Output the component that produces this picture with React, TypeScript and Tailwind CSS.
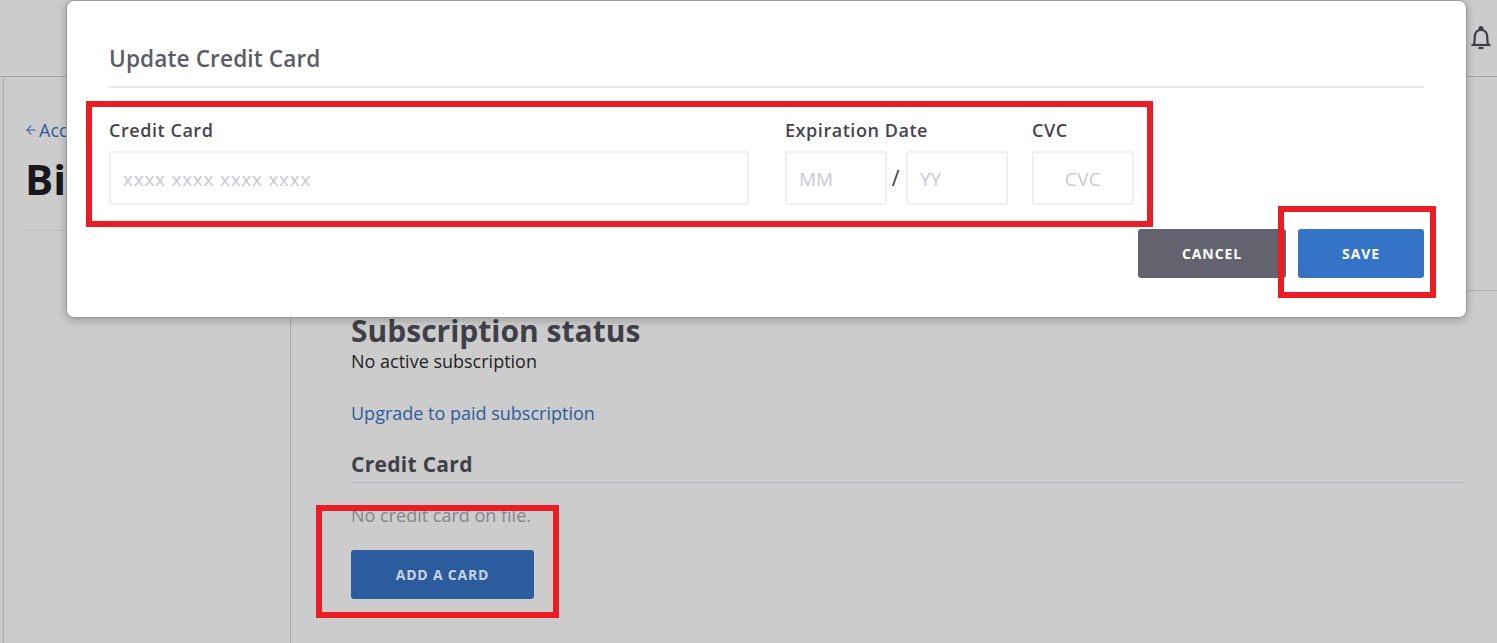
import { ArrowLeft } from "lucide-react";

function Field({ placeholder, className }: { placeholder: string; className: string }) {
    return (
        <input
            placeholder={placeholder}
            className={`h-[54px] rounded-[3px] border-2 border-[#eeeef3] bg-white pt-[2px] text-[19px] placeholder:text-[#c8c8d4] outline-none ${className}`}
        />
    );
}

function BellIcon() {
    return (
        <svg width="20" height="24" viewBox="0 0 20 24" fill="none" stroke="#3e3e46" strokeWidth="2.2">
            <circle cx="10" cy="2.5" r="1.4" fill="#3e3e46" />
            <path d="M3 18.5 C4 15 3.5 11.5 4 9 C4.6 6 7.2 4 10 4 C12.8 4 15.4 6 16 9 C16.5 11.5 16 15 17 18.5" />
            <path d="M0.5 19 H19.5" />
            <path d="M7.5 22 H12.5" />
        </svg>
    );
}

function UpdateCardModal() {
    return (
        <div className="absolute left-[66px] top-0 w-[1401px] h-[318px] rounded-lg border border-[#9a9a9a] bg-white pl-[42px] pr-[42px] pt-[43px] shadow-[0_2px_8px_rgba(0,0,0,0.25)]">
            <h2 className="text-[22.6px] leading-[30px] font-semibold tracking-[0.12px] text-[#5c5c68] pb-[12px] border-b-2 border-[#e6e6ea]">Update Credit Card</h2>
            <div className="flex mt-[30px]">
                <div className="w-[640px] mr-[36px]">
                    <label className="block text-[18px] leading-[24px] font-semibold tracking-[0.55px] text-[#45454d] mb-[9px]">Credit Card</label>
                    <Field placeholder="xxxx xxxx xxxx xxxx" className="w-full pl-[12px] tracking-[0.75px]" />
                </div>
                <div className="w-[247px]">
                    <label className="block text-[18px] leading-[24px] font-semibold tracking-[0.55px] text-[#45454d] mb-[9px] whitespace-nowrap">Expiration Date</label>
                    <div className="flex items-center">
                        <Field placeholder="MM" className="w-[102px] pl-[12px]" />
                        <span className="w-[19px] pt-[2px] pr-[2px] text-center text-[21px] text-[#3b3b42]">/</span>
                        <Field placeholder="YY" className="w-[102px] pl-[12px]" />
                    </div>
                </div>
                <div>
                    <label className="block text-[18px] leading-[24px] font-semibold tracking-[0.55px] text-[#45454d] mb-[9px]">CVC</label>
                    <Field placeholder="CVC" className="w-[102px] text-center tracking-[0.4px]" />
                </div>
            </div>
            <div className="flex justify-end gap-[12px] mt-[24px]">
                <button className="w-[148px] h-[49px] rounded-[3px] bg-[#62636f] text-white text-[14px] font-bold tracking-[0.9px]">CANCEL</button>
                <button className="w-[126px] h-[49px] rounded-[3px] bg-[#3573c6] text-white text-[14px] font-bold tracking-[0.9px]">SAVE</button>
            </div>
        </div>
    );
}

export default function App() {
    return (
        <div className="relative h-[643px] overflow-hidden bg-[#cccccc] font-['Open_Sans',sans-serif]">
            <header className="h-[77px] border-b border-[#a8a8a8] flex items-center justify-end pr-[6px] pb-[1px]">
                <BellIcon />
            </header>
            <div className="flex h-[566px] ml-[3px]">
                <aside className="w-[288px] border-l border-r border-[#a8a8a8] pl-[21px] shrink-0">
                    <div className="pt-[41px] flex items-center text-[18px] leading-[24px] text-[#2b5c9e] whitespace-nowrap">
                        <ArrowLeft size={14} strokeWidth={1.8} className="ml-[-1px] mr-[1px]" />
                        <span>Account</span>
                    </div>
                    <h1 className="mt-[12px] text-[42px] leading-[50px] font-bold text-[#17171c] pb-[26px] border-b border-[#bdbdbd]">Billing</h1>
                </aside>
                <main className="flex-1">
                    <div className="h-[214px] border-b border-[#b0b0b0]"></div>
                    <div className="pl-[60px] pr-[33px] pt-[21px]">
                        <h2 className="text-[30px] leading-[38px] font-bold text-[#3f3f48]">Subscription status</h2>
                        <p className="text-[18px] leading-[22px] text-[#1f1f24]">No active subscription</p>
                        <a className="block mt-[30px] text-[18px] leading-[22px] text-[#2b5c9e]">Upgrade to paid subscription</a>
                        <h3 className="mt-[27px] text-[21px] leading-[26px] font-bold tracking-[0.3px] text-[#3f3f48] pb-[5px] border-b border-[#b8b8c4]">Credit Card</h3>
                        <p className="mt-[21px] text-[18px] leading-[22px] text-[#85858f]">No credit card on file.</p>
                        <button className="mt-[24px] w-[183px] h-[49px] rounded-[3px] bg-[#2b5c9e] text-[#c9d3e2] text-[14px] font-bold tracking-[0.8px]">ADD A CARD</button>
                    </div>
                </main>
            </div>
            <UpdateCardModal />
            {/* red annotation boxes drawn over the screenshot */}
            <div className="absolute left-[86px] top-[101px] w-[1067px] h-[126px] border-[6px] border-[#ec1c24]"></div>
            <div className="absolute left-[1278px] top-[206px] w-[158px] h-[92px] border-[6px] border-[#ec1c24]"></div>
            <div className="absolute left-[316px] top-[505px] w-[243px] h-[113px] border-[6px] border-[#ec1c24]"></div>
        </div>
    );
}
